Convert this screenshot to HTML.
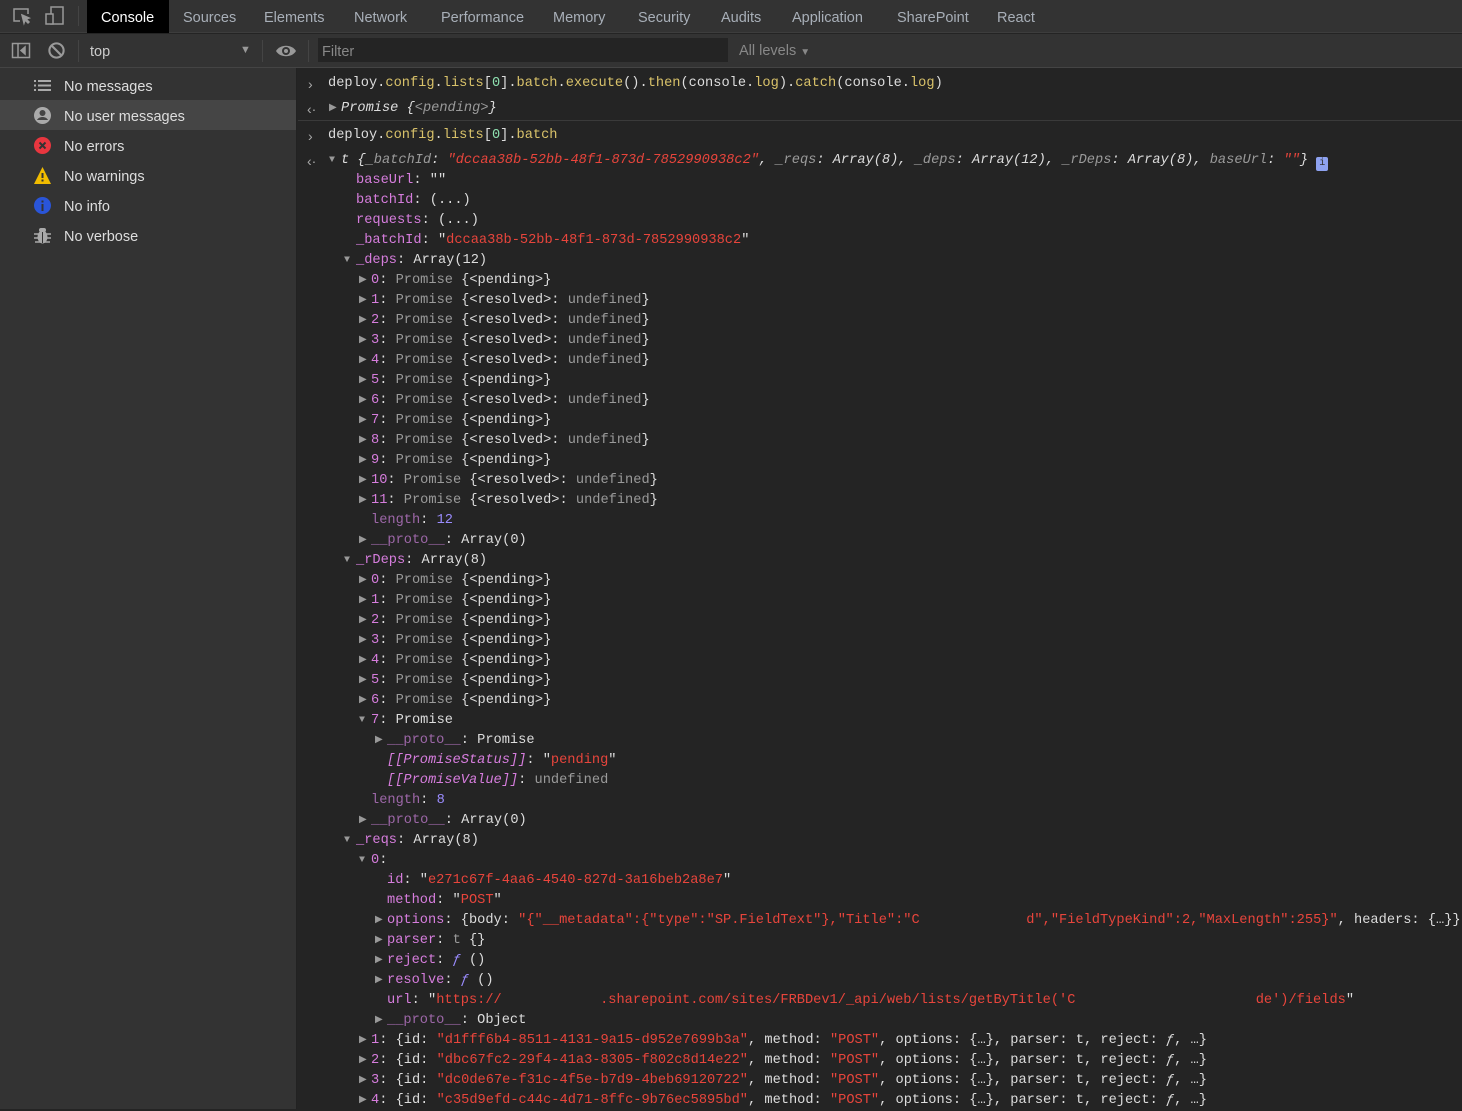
<!DOCTYPE html>
<html><head><meta charset="utf-8"><style>
*{margin:0;padding:0;box-sizing:border-box}
body{width:1462px;height:1109px;overflow:hidden;background:#242424;font-family:"Liberation Sans",sans-serif;position:relative}
#tabs{position:absolute;left:0;top:0;width:1462px;height:33px;background:#333;border-bottom:1px solid #3d3d3d}
#tabs span{position:absolute;top:10px;font-size:14.5px;color:#a8afb8}
#tabs .act{left:87px;top:0;width:82px;height:33px;background:#000;color:#fff;padding:10px 0 0 14px}
#tb{position:absolute;left:0;top:34px;width:1462px;height:34px;background:#333;border-bottom:1px solid #444}
#side{position:absolute;left:0;top:68px;width:297px;height:1041px;background:#333;border-right:1px solid #222}
.si{position:absolute;left:0;width:296px;height:30px;font-size:14.5px;color:#ddd;padding:9px 0 0 64px}
.ic{position:absolute;left:34px;top:7px;width:17px;height:17px}
.ln{position:absolute;height:20px;line-height:20px;margin-top:2px;font-family:"Liberation Mono",monospace;font-size:13.67px;color:#ddd;white-space:pre}
.k{color:#d67ddd}.kd{color:#9d67a8}.s{color:#e8453c}.n{color:#9b8cff}.g{color:#9a9a9a}.y{color:#d9c26a}.nb{color:#8fe0b0}.i{font-style:italic}
.r,.d{position:absolute;left:-12px;top:0;width:10px;color:#999;font-size:10px;font-style:normal}
.r::before{content:"\25B6"}.d::before{content:"\25BC"}
.p{position:absolute;left:-20px;color:#aaa;font-family:"Liberation Sans",sans-serif;font-size:14px}
</style></head><body>
<div id="tabs">
<svg style="position:absolute;left:12px;top:6px" width="20" height="20" viewBox="0 0 20 20" fill="none" stroke="#999" stroke-width="1.5"><path d="M8 15H2V3h14v5"/><path d="M10 9l7 3-3 1 3 3-1 1-3-3-1 3z" fill="#999"/></svg>
<svg style="position:absolute;left:44px;top:5px" width="22" height="22" viewBox="0 0 22 22" fill="none" stroke="#999" stroke-width="1.5"><rect x="7" y="2" width="12" height="17"/><rect x="2" y="9" width="7" height="10" fill="#333"/></svg>
<div style="position:absolute;left:78px;top:6px;width:1px;height:20px;background:#444"></div>
<span class="act">Console</span>
<span style="left:183px">Sources</span><span style="left:264px">Elements</span><span style="left:354px">Network</span><span style="left:441px">Performance</span><span style="left:553px">Memory</span><span style="left:638px">Security</span><span style="left:721px">Audits</span><span style="left:792px">Application</span><span style="left:897px">SharePoint</span><span style="left:997px">React</span>
</div>
<div id="tb">
<svg style="position:absolute;left:11px;top:7px" width="20" height="20" viewBox="0 0 20 20" fill="none" stroke="#999" stroke-width="1.5"><rect x="1.5" y="2.5" width="17" height="14"/><path d="M7 2.5v14"/><path d="M14 6v7l-4-3.5z" fill="#999"/></svg>
<svg style="position:absolute;left:47px;top:7px" width="19" height="19" viewBox="0 0 20 20" fill="none" stroke="#999" stroke-width="2.2"><circle cx="10" cy="10" r="7.5"/><path d="M5 5l10 10"/></svg>
<div style="position:absolute;left:78px;top:6px;width:1px;height:22px;background:#444"></div>
<span style="position:absolute;left:90px;top:10px;font-size:14.5px;color:#ccc">top</span>
<span style="position:absolute;left:240px;top:10px;font-size:11px;color:#999">▼</span>
<div style="position:absolute;left:262px;top:6px;width:1px;height:22px;background:#444"></div>
<svg style="position:absolute;left:275px;top:9px" width="22" height="16" viewBox="0 0 22 16"><path d="M1 8C5 1 17 1 21 8 17 15 5 15 1 8z" fill="#999"/><circle cx="11" cy="8" r="4" fill="#333"/><circle cx="11" cy="8" r="2" fill="#999"/></svg>
<div style="position:absolute;left:308px;top:6px;width:1px;height:22px;background:#444"></div>
<div style="position:absolute;left:318px;top:4px;width:410px;height:24px;background:#242424"></div>
<span style="position:absolute;left:322px;top:10px;font-size:14.5px;color:#888">Filter</span>
<span style="position:absolute;left:739px;top:9px;font-size:14.5px;color:#888">All levels <span style="font-size:10px">▼</span></span>
</div>
<div id="side">
<div class="si" style="top:2px"><svg class="ic" viewBox="0 0 17 17" fill="#aaa"><rect x="0" y="3" width="2" height="2"/><rect x="4" y="3" width="13" height="2"/><rect x="0" y="7.5" width="2" height="2"/><rect x="4" y="7.5" width="13" height="2"/><rect x="0" y="12" width="2" height="2"/><rect x="4" y="12" width="13" height="2"/></svg>No messages</div>
<div class="si" style="top:32px;background:#454545"><svg class="ic" viewBox="0 0 17 17"><circle cx="8.5" cy="8.5" r="8.5" fill="#aaa"/><circle cx="8.5" cy="6" r="3" fill="#454545"/><path d="M3 13c2-4 9-4 11 0" fill="#454545"/></svg>No user messages</div>
<div class="si" style="top:62px"><svg class="ic" viewBox="0 0 17 17"><circle cx="8.5" cy="8.5" r="8.5" fill="#e8363f"/><path d="M5.5 5.5l6 6M11.5 5.5l-6 6" stroke="#333" stroke-width="2"/></svg>No errors</div>
<div class="si" style="top:92px"><svg class="ic" viewBox="0 0 17 17"><path d="M8.5 0L17 17H0z" fill="#f1bc00"/><path d="M8.5 6v5" stroke="#333" stroke-width="2"/><rect x="7.5" y="12.5" width="2" height="2" fill="#333"/></svg>No warnings</div>
<div class="si" style="top:122px"><svg class="ic" viewBox="0 0 17 17"><circle cx="8.5" cy="8.5" r="8.5" fill="#2a55d8"/><rect x="7.5" y="7" width="2" height="7" fill="#333"/><rect x="7.5" y="3.5" width="2" height="2" fill="#333"/></svg>No info</div>
<div class="si" style="top:152px"><svg class="ic" viewBox="0 0 17 17" fill="#aaa"><ellipse cx="8.5" cy="10" rx="5" ry="6.5"/><rect x="5" y="1" width="7" height="4" rx="2"/><path d="M0 7h17M0 11h17M1 15h15" stroke="#aaa" stroke-width="1.6"/><path d="M8.5 5v11" stroke="#333" stroke-width="1"/></svg>No verbose</div>
</div>

<div style="position:absolute;left:298px;top:120px;width:1164px;height:1px;background:#3a3a3a"></div>

<div class="ln" style="top:72px;left:328px"><span class="p">›</span>deploy.<span class="y">config</span>.<span class="y">lists</span>[<span class="nb">0</span>].<span class="y">batch</span>.<span class="y">execute</span>().<span class="y">then</span>(console.<span class="y">log</span>).<span class="y">catch</span>(console.<span class="y">log</span>)</div>
<div class="ln i" style="top:97px;left:341px"><span class="p" style="left:-34px;font-style:normal">‹·</span><span class="r"></span>Promise {<span class="g">&lt;pending&gt;</span>}</div>
<div class="ln" style="top:124px;left:328px"><span class="p">›</span>deploy.<span class="y">config</span>.<span class="y">lists</span>[<span class="nb">0</span>].<span class="y">batch</span></div>
<div class="ln i" style="top:149px;left:341px"><span class="p" style="left:-34px;font-style:normal">‹·</span><span class="d"></span>t {<span class="g">_batchId</span>: <span class="s">"dccaa38b-52bb-48f1-873d-7852990938c2"</span>, <span class="g">_reqs</span>: Array(8), <span class="g">_deps</span>: Array(12), <span class="g">_rDeps</span>: Array(8), <span class="g">baseUrl</span>: <span class="s">""</span>} <span style="display:inline-block;width:12px;height:14px;background:#8ea2f0;border-radius:2px;vertical-align:-2px;color:#333;font-size:10px;line-height:14px;text-align:center;font-style:normal">i</span></div>

<div class="ln" style="top:169px;left:356px"><span class="k">baseUrl</span>: ""</div>
<div class="ln" style="top:189px;left:356px"><span class="k">batchId</span>: (...)</div>
<div class="ln" style="top:209px;left:356px"><span class="k">requests</span>: (...)</div>
<div class="ln" style="top:229px;left:356px"><span class="k">_batchId</span>: "<span class="s">dccaa38b-52bb-48f1-873d-7852990938c2</span>"</div>
<div class="ln" style="top:249px;left:356px"><span class="d"></span><span class="k">_deps</span>: Array(12)</div>
<div class="ln" style="top:269px;left:371px"><span class="r"></span><span class="k">0</span>: <span class="g">Promise</span> {&lt;pending&gt;}</div>
<div class="ln" style="top:289px;left:371px"><span class="r"></span><span class="k">1</span>: <span class="g">Promise</span> {&lt;resolved&gt;: <span class="g">undefined</span>}</div>
<div class="ln" style="top:309px;left:371px"><span class="r"></span><span class="k">2</span>: <span class="g">Promise</span> {&lt;resolved&gt;: <span class="g">undefined</span>}</div>
<div class="ln" style="top:329px;left:371px"><span class="r"></span><span class="k">3</span>: <span class="g">Promise</span> {&lt;resolved&gt;: <span class="g">undefined</span>}</div>
<div class="ln" style="top:349px;left:371px"><span class="r"></span><span class="k">4</span>: <span class="g">Promise</span> {&lt;resolved&gt;: <span class="g">undefined</span>}</div>
<div class="ln" style="top:369px;left:371px"><span class="r"></span><span class="k">5</span>: <span class="g">Promise</span> {&lt;pending&gt;}</div>
<div class="ln" style="top:389px;left:371px"><span class="r"></span><span class="k">6</span>: <span class="g">Promise</span> {&lt;resolved&gt;: <span class="g">undefined</span>}</div>
<div class="ln" style="top:409px;left:371px"><span class="r"></span><span class="k">7</span>: <span class="g">Promise</span> {&lt;pending&gt;}</div>
<div class="ln" style="top:429px;left:371px"><span class="r"></span><span class="k">8</span>: <span class="g">Promise</span> {&lt;resolved&gt;: <span class="g">undefined</span>}</div>
<div class="ln" style="top:449px;left:371px"><span class="r"></span><span class="k">9</span>: <span class="g">Promise</span> {&lt;pending&gt;}</div>
<div class="ln" style="top:469px;left:371px"><span class="r"></span><span class="k">10</span>: <span class="g">Promise</span> {&lt;resolved&gt;: <span class="g">undefined</span>}</div>
<div class="ln" style="top:489px;left:371px"><span class="r"></span><span class="k">11</span>: <span class="g">Promise</span> {&lt;resolved&gt;: <span class="g">undefined</span>}</div>
<div class="ln" style="top:509px;left:371px"><span class="kd">length</span>: <span class="n">12</span></div>
<div class="ln" style="top:529px;left:371px"><span class="r"></span><span class="kd">__proto__</span>: Array(0)</div>
<div class="ln" style="top:549px;left:356px"><span class="d"></span><span class="k">_rDeps</span>: Array(8)</div>
<div class="ln" style="top:569px;left:371px"><span class="r"></span><span class="k">0</span>: <span class="g">Promise</span> {&lt;pending&gt;}</div>
<div class="ln" style="top:589px;left:371px"><span class="r"></span><span class="k">1</span>: <span class="g">Promise</span> {&lt;pending&gt;}</div>
<div class="ln" style="top:609px;left:371px"><span class="r"></span><span class="k">2</span>: <span class="g">Promise</span> {&lt;pending&gt;}</div>
<div class="ln" style="top:629px;left:371px"><span class="r"></span><span class="k">3</span>: <span class="g">Promise</span> {&lt;pending&gt;}</div>
<div class="ln" style="top:649px;left:371px"><span class="r"></span><span class="k">4</span>: <span class="g">Promise</span> {&lt;pending&gt;}</div>
<div class="ln" style="top:669px;left:371px"><span class="r"></span><span class="k">5</span>: <span class="g">Promise</span> {&lt;pending&gt;}</div>
<div class="ln" style="top:689px;left:371px"><span class="r"></span><span class="k">6</span>: <span class="g">Promise</span> {&lt;pending&gt;}</div>
<div class="ln" style="top:709px;left:371px"><span class="d"></span><span class="k">7</span>: Promise</div>
<div class="ln" style="top:729px;left:387px"><span class="r"></span><span class="kd">__proto__</span>: Promise</div>
<div class="ln" style="top:749px;left:387px"><span class="k i">[[PromiseStatus]]</span>: "<span class="s">pending</span>"</div>
<div class="ln" style="top:769px;left:387px"><span class="k i">[[PromiseValue]]</span>: <span class="g">undefined</span></div>
<div class="ln" style="top:789px;left:371px"><span class="kd">length</span>: <span class="n">8</span></div>
<div class="ln" style="top:809px;left:371px"><span class="r"></span><span class="kd">__proto__</span>: Array(0)</div>
<div class="ln" style="top:829px;left:356px"><span class="d"></span><span class="k">_reqs</span>: Array(8)</div>
<div class="ln" style="top:849px;left:371px"><span class="d"></span><span class="k">0</span>:</div>
<div class="ln" style="top:869px;left:387px"><span class="k">id</span>: "<span class="s">e271c67f-4aa6-4540-827d-3a16beb2a8e7</span>"</div>
<div class="ln" style="top:889px;left:387px"><span class="k">method</span>: "<span class="s">POST</span>"</div>
<div class="ln" style="top:909px;left:387px"><span class="r"></span><span class="k">options</span>: {body: <span class="s">"{"__metadata":{"type":"SP.FieldText"},"Title":"C             d","FieldTypeKind":2,"MaxLength":255}"</span>, headers: {…}}</div>
<div class="ln" style="top:929px;left:387px"><span class="r"></span><span class="k">parser</span>: <span class="g">t</span> {}</div>
<div class="ln" style="top:949px;left:387px"><span class="r"></span><span class="k">reject</span>: <span class="n i">ƒ</span> ()</div>
<div class="ln" style="top:969px;left:387px"><span class="r"></span><span class="k">resolve</span>: <span class="n i">ƒ</span> ()</div>
<div class="ln" style="top:989px;left:387px"><span class="k">url</span>: "<span class="s">https://            .sharepoint.com/sites/FRBDev1/_api/web/lists/getByTitle('C                      de')/fields</span>"</div>
<div class="ln" style="top:1009px;left:387px"><span class="r"></span><span class="kd">__proto__</span>: Object</div>
<div class="ln" style="top:1029px;left:371px"><span class="r"></span><span class="k">1</span>: {id: <span class="s">"d1fff6b4-8511-4131-9a15-d952e7699b3a"</span>, method: <span class="s">"POST"</span>, options: {…}, parser: t, reject: <span class="i">ƒ</span>, …}</div>
<div class="ln" style="top:1049px;left:371px"><span class="r"></span><span class="k">2</span>: {id: <span class="s">"dbc67fc2-29f4-41a3-8305-f802c8d14e22"</span>, method: <span class="s">"POST"</span>, options: {…}, parser: t, reject: <span class="i">ƒ</span>, …}</div>
<div class="ln" style="top:1069px;left:371px"><span class="r"></span><span class="k">3</span>: {id: <span class="s">"dc0de67e-f31c-4f5e-b7d9-4beb69120722"</span>, method: <span class="s">"POST"</span>, options: {…}, parser: t, reject: <span class="i">ƒ</span>, …}</div>
<div class="ln" style="top:1089px;left:371px"><span class="r"></span><span class="k">4</span>: {id: <span class="s">"c35d9efd-c44c-4d71-8ffc-9b76ec5895bd"</span>, method: <span class="s">"POST"</span>, options: {…}, parser: t, reject: <span class="i">ƒ</span>, …}</div>
</body></html>
